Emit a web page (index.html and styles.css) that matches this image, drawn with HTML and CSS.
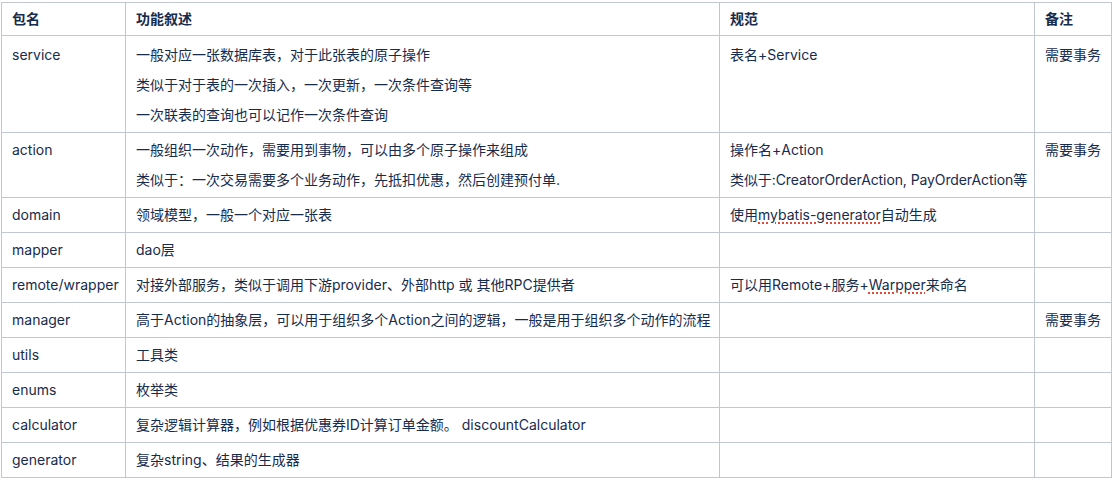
FILE: index.html
```html
<!DOCTYPE html>
<html lang="zh-CN">
<head>
<meta charset="utf-8">
<title>包结构</title>
<link rel="stylesheet" href="styles.css">
</head>
<body>
<div class="wrap">
<table class="pkg">
  <colgroup>
    <col class="c-name">
    <col class="c-desc">
    <col class="c-spec">
    <col class="c-note">
  </colgroup>
  <thead>
    <tr><th>包名</th><th>功能叙述</th><th>规范</th><th>备注</th></tr>
  </thead>
  <tbody>
    <tr class="first">
      <td>service</td>
      <td><p>一般对应一张数据库表，对于此张表的原子操作</p><p>类似于对于表的一次插入，一次更新，一次条件查询等</p><p>一次联表的查询也可以记作一次条件查询</p></td>
      <td><p>表名+Service</p></td>
      <td><p>需要事务</p></td>
    </tr>
    <tr>
      <td>action</td>
      <td><p>一般组织一次动作，需要用到事物，可以由多个原子操作来组成</p><p>类似于：一次交易需要多个业务动作，先抵扣优惠，然后创建预付单.</p></td>
      <td><p>操作名+Action</p><p class="tight">类似于:CreatorOrderAction, PayOrderAction等</p></td>
      <td><p>需要事务</p></td>
    </tr>
    <tr>
      <td>domain</td>
      <td>领域模型，一般一个对应一张表</td>
      <td>使用<span class="spell">mybatis-generator</span>自动生成</td>
      <td></td>
    </tr>
    <tr>
      <td>mapper</td>
      <td>dao层</td>
      <td></td>
      <td></td>
    </tr>
    <tr>
      <td>remote/wrapper</td>
      <td>对接外部服务，类似于调用下游provider、外部http 或 其他RPC提供者</td>
      <td>可以用Remote+服务+<span class="spell">Warpper</span>来命名</td>
      <td></td>
    </tr>
    <tr>
      <td>manager</td>
      <td>高于Action的抽象层，可以用于组织多个Action之间的逻辑，一般是用于组织多个动作的流程</td>
      <td></td>
      <td>需要事务</td>
    </tr>
    <tr>
      <td>utils</td>
      <td>工具类</td>
      <td></td>
      <td></td>
    </tr>
    <tr>
      <td>enums</td>
      <td>枚举类</td>
      <td></td>
      <td></td>
    </tr>
    <tr>
      <td>calculator</td>
      <td>复杂逻辑计算器，例如根据优惠券ID计算订单金额。 discountCalculator</td>
      <td></td>
      <td></td>
    </tr>
    <tr>
      <td>generator</td>
      <td>复杂string、结果的生成器</td>
      <td></td>
      <td></td>
    </tr>
  </tbody>
</table>
</div>
</body>
</html>
```
FILE: styles.css
```css
html, body {
  margin: 0;
  padding: 0;
  background: #ffffff;
}

.wrap {
  padding: 2px 0 0 1px;
}

.pkg {
  border-collapse: collapse;
  table-layout: fixed;
  width: 1111px;
  font-family: Inter, "Noto Sans CJK SC", sans-serif;
  font-size: 14px;
  line-height: 20px;
  color: #172b4d;
}

.c-name { width: 124px; }
.c-desc { width: 594px; }
.c-spec { width: 315px; }
.c-note { width: 77px; }

.pkg th,
.pkg td {
  border: 1px solid #c1c7d0;
  text-align: left;
  vertical-align: top;
  padding: 7px 10px;
  white-space: nowrap;
  overflow: hidden;
}

.pkg th {
  font-weight: 600;
  padding: 6px 10px;
}

.pkg p {
  margin: 0;
}

.pkg p + p {
  margin-top: 10px;
}

.pkg p.tight {
  letter-spacing: -0.1px;
}

.pkg tr.first td {
  padding-top: 9px;
}

.spell {
  text-decoration: underline dotted #e5493a;
  text-decoration-thickness: 1.5px;
  text-underline-offset: 2px;
}
```
